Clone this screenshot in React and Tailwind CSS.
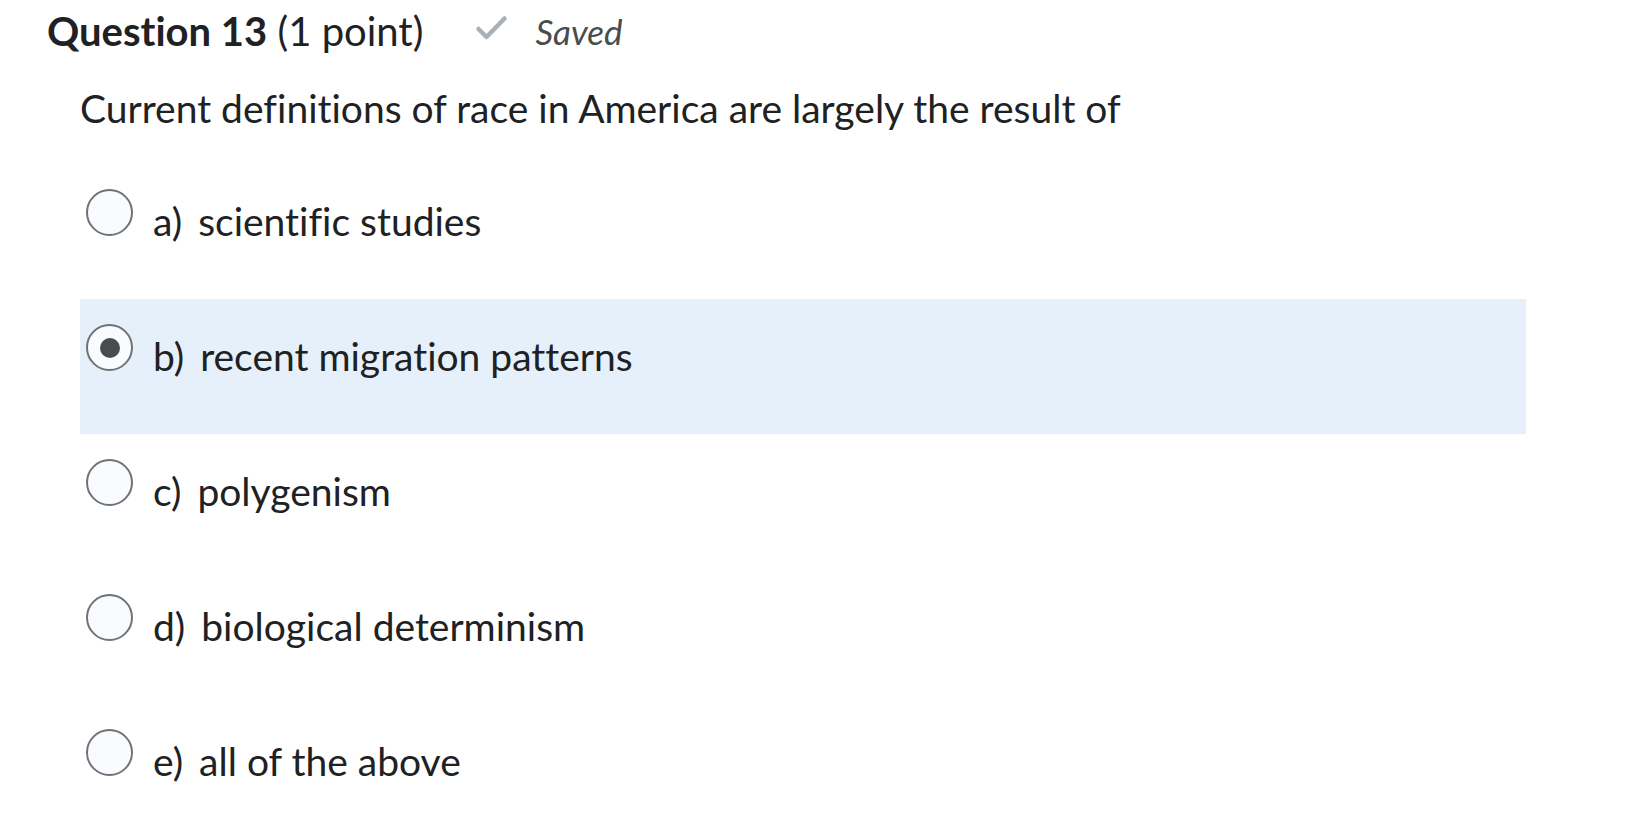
import React from 'react'

const options = [
  { letter: 'a)', text: 'scientific studies' },
  { letter: 'b)', text: 'recent migration patterns', selected: true },
  { letter: 'c)', text: 'polygenism' },
  { letter: 'd)', text: 'biological determinism' },
  { letter: 'e)', text: 'all of the above' },
]

const Radio = ({ checked }) => (
  <span className="flex h-[47px] w-[47px] shrink-0 items-center justify-center rounded-full border-2 border-[#6e7376] bg-[#f9fbff]">
    {checked && <span className="h-[20px] w-[20px] rounded-full bg-[#494c4e]" />}
  </span>
)

export default function App() {
  return (
    <div
      className="min-h-screen bg-white text-[#202122] [font-variant-ligatures:none]"
      style={{ fontFamily: 'Lato, "Noto Sans", sans-serif' }}
    >
      <div className="flex h-[62px] items-center pl-[47px]">
        <h2 className="text-[40px] leading-none">
          <span className="font-bold">Question 13</span> (1 point)
        </h2>
        <svg className="ml-[52px] mt-[-6px] h-[26px] w-[33px]" viewBox="0 0 33 26" fill="none">
          <path d="M3.5 14 L11.5 22 L29.5 3.5" stroke="#a9b0b6" strokeWidth="4.5" strokeLinecap="round" strokeLinejoin="round" />
        </svg>
        <span className="ml-[27px] text-[35px] italic text-[#494c4e]">Saved</span>
      </div>

      <div className="pl-[80px] pr-[106px]">
        <p className="mt-[24px] text-[39px] leading-[44px]">
          Current definitions of race in America are largely the result of
        </p>
        <div className="mt-[34px]">
          {options.map((o) => (
            <label
              key={o.letter}
              className={`flex h-[135px] items-start pl-[6px] pt-[25px] ${o.selected ? 'bg-[#e6f0fa]' : ''}`}
            >
              <Radio checked={o.selected} />
              <span className="ml-[20px] mt-[10px] flex text-[39px] leading-[44px]">
                <span className="mr-[16px]">{o.letter}</span>
                <span>{o.text}</span>
              </span>
            </label>
          ))}
        </div>
      </div>
    </div>
  )
}
